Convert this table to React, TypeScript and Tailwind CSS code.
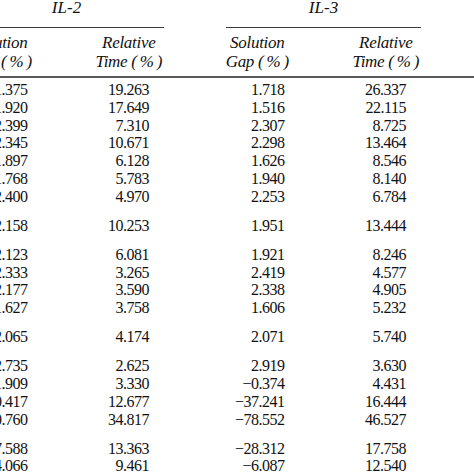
type Row = [string, string, string, string];

// rows grouped the way the table breaks them up
const groups: Row[][] = [
  [
    ["1.375", "19.263", "1.718", "26.337"],
    ["1.920", "17.649", "1.516", "22.115"],
    ["2.399", "7.310", "2.307", "8.725"],
    ["2.345", "10.671", "2.298", "13.464"],
    ["1.897", "6.128", "1.626", "8.546"],
    ["1.768", "5.783", "1.940", "8.140"],
    ["2.400", "4.970", "2.253", "6.784"],
  ],
  [["2.158", "10.253", "1.951", "13.444"]],
  [
    ["2.123", "6.081", "1.921", "8.246"],
    ["2.333", "3.265", "2.419", "4.577"],
    ["2.177", "3.590", "2.338", "4.905"],
    ["1.627", "3.758", "1.606", "5.232"],
  ],
  [["2.065", "4.174", "2.071", "5.740"]],
  [
    ["2.735", "2.625", "2.919", "3.630"],
    ["1.909", "3.330", "\u22120.374", "4.431"],
    ["\u221220.417", "12.677", "\u221237.241", "16.444"],
    ["\u221250.760", "34.817", "\u221278.552", "46.527"],
  ],
  [
    ["\u221217.588", "13.363", "\u221228.312", "17.758"],
    ["\u22124.066", "9.461", "\u22126.087", "12.540"],
  ],
];

const Header = ({ top, bottom }: { top: string; bottom: string }) => (
  <div className="w-[128.5px] text-center italic leading-[18.5px] tracking-[-0.3px]">
    <div>{top}</div>
    <div>{bottom}</div>
  </div>
);

const GroupTitle = ({ label }: { label: string }) => (
  <div className="w-[257px] pl-[33px] pr-[29px]">
    <div className="text-center italic leading-[17px] text-[17px]">{label}</div>
    <div className="mt-[11px] h-px bg-[#3c3c3c]" />
  </div>
);

export default function App() {
  return (
    <div className="w-[474px] h-[474px] overflow-hidden bg-white text-[#111] font-[family-name:'Liberation_Serif',serif]">
      <div className="ml-[-64px] w-[640px] -mt-px">
        <div className="flex">
          <GroupTitle label="IL-2" />
          <GroupTitle label="IL-3" />
        </div>

        <div className="flex pt-[6px] text-[17px]">
          <Header top="Solution" bottom={"Gap (\u2009%\u2009)"} />
          <Header top="Relative" bottom={"Time (\u2009%\u2009)"} />
          <Header top="Solution" bottom={"Gap (\u2009%\u2009)"} />
          <Header top="Relative" bottom={"Time (\u2009%\u2009)"} />
        </div>

        <div className="mt-[5px] h-[2px] bg-[#5a5a5a]" />

        <div className="pt-[3px] text-[16px] leading-[17.75px] tracking-[-0.5px]">
          {groups.map((rows, gi) => (
            <div key={gi} className={gi > 0 ? "mt-[11.4px]" : ""}>
              {rows.map((r, ri) => (
                <div key={ri} className="flex text-right">
                  <div className="w-[128.5px] pr-[37px] whitespace-nowrap">{r[0]}</div>
                  <div className="w-[128.5px] pr-[44px] whitespace-nowrap">{r[1]}</div>
                  <div className="w-[128.5px] pr-[37px] whitespace-nowrap">{r[2]}</div>
                  <div className="w-[128.5px] pr-[44px] whitespace-nowrap">{r[3]}</div>
                </div>
              ))}
            </div>
          ))}
        </div>
      </div>
    </div>
  );
}
